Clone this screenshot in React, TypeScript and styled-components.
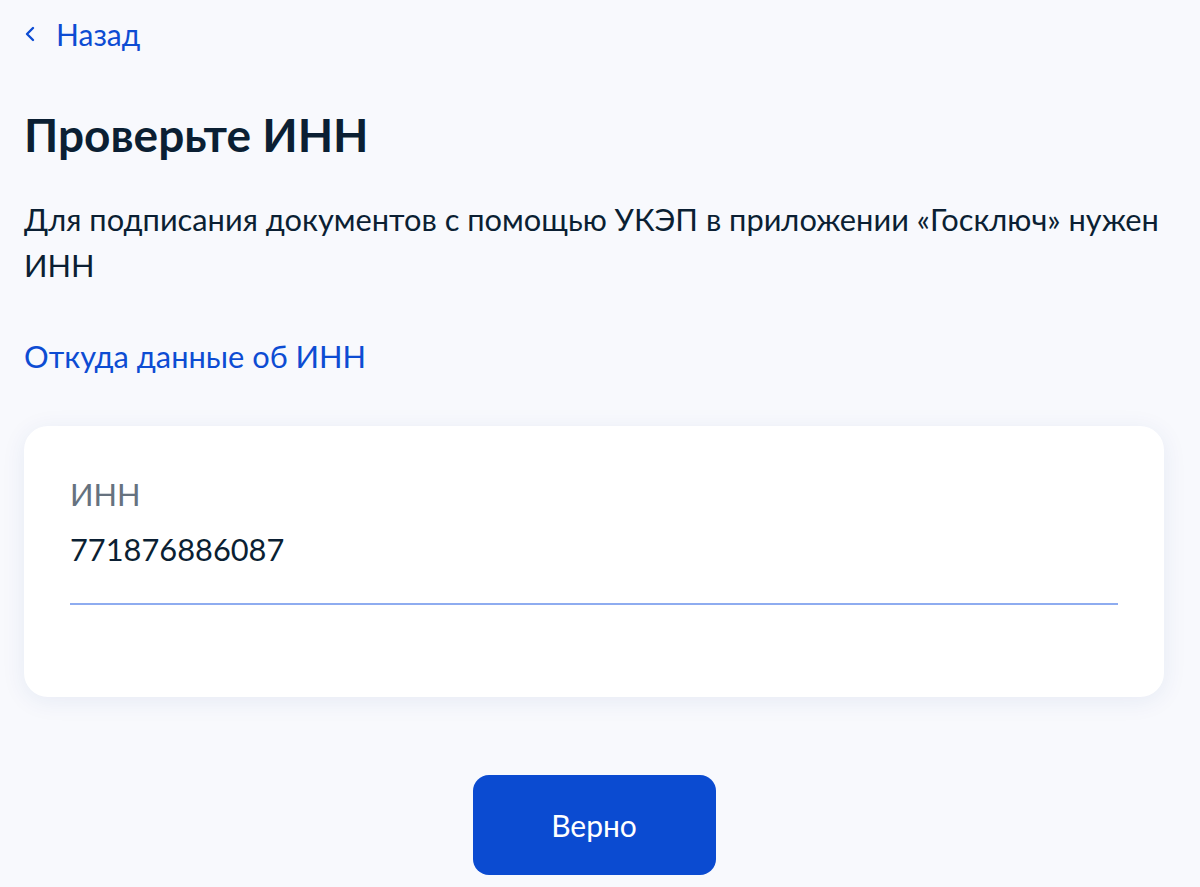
import React from 'react';
import styled, { createGlobalStyle } from 'styled-components';

const GlobalStyle = createGlobalStyle`
  html, body {
    margin: 0;
    padding: 0;
    background: #f8f9fd;
  }
  body {
    font-family: Lato, "Noto Sans", sans-serif;
    color: #0b1f33;
  }
`;

const Page = styled.main`
  padding: 12px 36px 0 24px;
  display: flex;
  flex-direction: column;
`;

const BackLink = styled.a`
  display: inline-flex;
  align-items: center;
  gap: 20px;
  color: #0d4cd3;
  font-size: 30px;
  line-height: 44px;
  text-decoration: none;
  align-self: flex-start;
`;

const Title = styled.h1`
  margin: 51px 0 0;
  font-size: 46px;
  font-weight: 700;
  line-height: 56px;
`;

const Text = styled.p`
  margin: 34px -24px 0 0;
  font-size: 30.8px;
  line-height: 46px;
`;

const InfoLink = styled.a`
  margin-top: 46px;
  color: #0d4cd3;
  font-size: 30.8px;
  line-height: 44px;
  text-decoration: none;
  align-self: flex-start;
`;

const Card = styled.section`
  margin-top: 47px;
  background: #fff;
  border-radius: 24px;
  box-shadow: 0 4px 24px rgba(30, 60, 140, 0.08);
  padding: 49px 46px 92px;
`;

const Label = styled.div`
  color: #66727f;
  font-size: 30.8px;
  line-height: 40px;
`;

const Value = styled.div`
  font-size: 30.8px;
  line-height: 40px;
  margin-top: 15px;
  padding-bottom: 33px;
  border-bottom: 2px solid #8eacf0;
`;

const Actions = styled.div`
  display: flex;
  justify-content: center;
  padding: 78px 0 12px;
`;

const Button = styled.button`
  width: 243px;
  height: 100px;
  border: 0;
  border-radius: 16px;
  background: #0b4bd1;
  color: #fff;
  font-family: inherit;
  font-size: 30px;
  cursor: pointer;
`;

export default function App(): React.ReactElement {
  return (
    <>
      <GlobalStyle />
      <Page>
        <BackLink href="#">
          <svg width="12" height="18" viewBox="0 0 12 18" fill="none">
            <path d="M9 3L3 9L9 15" stroke="#0d4cd3" strokeWidth="2.4" strokeLinecap="round" strokeLinejoin="round" />
          </svg>
          Назад
        </BackLink>
        <Title>Проверьте ИНН</Title>
        <Text>Для подписания документов с помощью УКЭП в приложении «Госключ» нужен ИНН</Text>
        <InfoLink href="#">Откуда данные об ИНН</InfoLink>
        <Card>
          <Label>ИНН</Label>
          <Value>771876886087</Value>
        </Card>
        <Actions>
          <Button>Верно</Button>
        </Actions>
      </Page>
    </>
  );
}
